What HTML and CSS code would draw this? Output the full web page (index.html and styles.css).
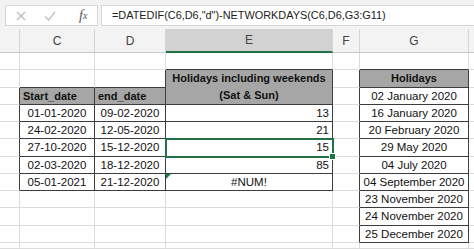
FILE: index.html
```html
<!DOCTYPE html>
<html lang="en">
<head>
  <meta charset="UTF-8" />
  <title>Holidays including weekends</title>
  <link rel="stylesheet" href="styles.css">
</head>
<body>
  <div class="formula-bar">
    <div class="fx-buttons">
      <svg class="btn-icon" width="12" height="12" viewBox="0 0 12 12"><path d="M2 2 L10 10 M10 2 L2 10" /></svg>
      <svg class="btn-icon check" width="12" height="12" viewBox="0 0 12 12"><path d="M1 6.5 L4.5 10 L11 2" /></svg>
      <span class="fx">f<sub>x</sub></span>
    </div>
    <div class="formula-input">=DATEDIF(C6,D6,"d")-NETWORKDAYS(C6,D6,G3:G11)</div>
  </div>

  <div class="sheet">
    <!-- column headers -->
    <div class="colhead"></div>
    <div class="colhead">C</div>
    <div class="colhead">D</div>
    <div class="colhead sel">E</div>
    <div class="colhead">F</div>
    <div class="colhead">G</div>
    <div class="colhead"></div>

    <!-- row 1 -->
    <div class="cell"></div>
    <div class="cell"></div>
    <div class="cell"></div>
    <div class="cell db"></div>
    <div class="cell"></div>
    <div class="cell db"></div>
    <div class="cell"></div>

    <!-- row 2 -->
    <div class="cell"></div>
    <div class="cell db"></div>
    <div class="cell dr db"></div>
    <div class="cell head-e fill bold dr db">
      <span>Holidays including weekends</span>
      <span>(Sat &amp; Sun)</span>
    </div>
    <div class="cell dr"></div>
    <div class="cell fill bold mid dr db">Holidays</div>
    <div class="cell"></div>

    <!-- row 3 -->
    <div class="cell dr"></div>
    <div class="cell fill bold dr db">Start_date</div>
    <div class="cell fill bold dr db">end_date</div>
    <div class="cell dr"></div>
    <div class="cell mid dr db">02 January 2020</div>
    <div class="cell"></div>

    <!-- row 4 -->
    <div class="cell dr"></div>
    <div class="cell mid dr db">01-01-2020</div>
    <div class="cell mid dr db">09-02-2020</div>
    <div class="cell end dr db">13</div>
    <div class="cell dr"></div>
    <div class="cell mid dr db">16 January 2020</div>
    <div class="cell"></div>

    <!-- row 5 -->
    <div class="cell dr"></div>
    <div class="cell mid dr db">24-02-2020</div>
    <div class="cell mid dr db">12-05-2020</div>
    <div class="cell end dr db">21</div>
    <div class="cell dr"></div>
    <div class="cell mid dr db">20 February 2020</div>
    <div class="cell"></div>

    <!-- row 6 -->
    <div class="cell dr"></div>
    <div class="cell mid dr db">27-10-2020</div>
    <div class="cell mid dr db">15-12-2020</div>
    <div class="cell end dr db active">15</div>
    <div class="cell dr"></div>
    <div class="cell mid dr db">29 May 2020</div>
    <div class="cell"></div>

    <!-- row 7 -->
    <div class="cell dr"></div>
    <div class="cell mid dr db">02-03-2020</div>
    <div class="cell mid dr db">18-12-2020</div>
    <div class="cell end dr db">85</div>
    <div class="cell dr"></div>
    <div class="cell mid dr db">04 July 2020</div>
    <div class="cell"></div>

    <!-- row 8 -->
    <div class="cell dr"></div>
    <div class="cell mid dr db">05-01-2021</div>
    <div class="cell mid dr db">21-12-2020</div>
    <div class="cell mid dr db error">#NUM!</div>
    <div class="cell dr"></div>
    <div class="cell mid dr db">04 September 2020</div>
    <div class="cell"></div>

    <!-- row 9 -->
    <div class="cell"></div>
    <div class="cell"></div>
    <div class="cell"></div>
    <div class="cell"></div>
    <div class="cell dr"></div>
    <div class="cell mid dr db">23 November 2020</div>
    <div class="cell"></div>

    <!-- row 10 -->
    <div class="cell"></div>
    <div class="cell"></div>
    <div class="cell"></div>
    <div class="cell"></div>
    <div class="cell dr"></div>
    <div class="cell mid dr db">24 November 2020</div>
    <div class="cell"></div>

    <!-- row 11 -->
    <div class="cell"></div>
    <div class="cell"></div>
    <div class="cell"></div>
    <div class="cell"></div>
    <div class="cell dr"></div>
    <div class="cell mid dr db">25 December 2020</div>
    <div class="cell"></div>

    <!-- row 12 (cut off) -->
    <div class="cell"></div>
    <div class="cell"></div>
    <div class="cell"></div>
    <div class="cell"></div>
    <div class="cell"></div>
    <div class="cell"></div>
    <div class="cell"></div>
  </div>
</body>
</html>
```

FILE: styles.css
```css
body {
  margin: 0;
  font-family: "Liberation Sans", Arial, sans-serif;
  background: #fff;
  color: #111;
  overflow: hidden;
}

/* formula bar */
.formula-bar {
  display: flex;
  gap: 3px;
  height: 29px;
  padding: 5px 0 3px 5px;
  box-sizing: border-box;
  background: #f3f3f3;
}

.fx-buttons {
  display: flex;
  align-items: center;
  width: 93px;
  box-sizing: border-box;
  padding-left: 9px;
  background: #fff;
  border: 1px solid #d6d6d6;
}

.btn-icon {
  fill: none;
  stroke: #bcbcbc;
  stroke-width: 1.2;
}

.btn-icon.check {
  margin-left: 17px;
}

.fx {
  margin-left: 23px;
  font-family: "Liberation Serif", serif;
  font-style: italic;
  font-size: 14px;
  color: #555;
}

.fx sub {
  font-size: 10px;
  vertical-align: 1px;
}

.formula-input {
  flex: 1;
  padding-left: 10px;
  background: #fff;
  border: 1px solid #d6d6d6;
  border-right: none;
  font-size: 10.9px;
  line-height: 19px;
  color: #222;
  white-space: nowrap;
}

/* sheet grid */
.sheet {
  display: grid;
  grid-template-columns: 20px 75px 71px 167px 27px 109px 1fr;
  grid-template-rows: 24px repeat(11, 17.25px) 1fr;
  height: 220px;
  font-size: 11.5px;
}

.colhead {
  display: flex;
  align-items: center;
  justify-content: center;
  background: #f3f3f3;
  border-right: 1px solid #d4d4d4;
  border-bottom: 1px solid #c8c8c8;
  font-size: 12px;
  color: #444;
}

.colhead.sel {
  background: #d2d2d2;
  border-bottom: 2px solid #217346;
}

.cell {
  position: relative;
  display: flex;
  align-items: center;
  padding: 0 3px;
  border-right: 1px solid #dcdcdc;
  border-bottom: 1px solid #dcdcdc;
  white-space: nowrap;
}

.dr { border-right-color: #3c3c3c; }
.db { border-bottom-color: #3c3c3c; }
.fill { background: #a6a6a6; }
.bold { font-weight: bold; font-size: 11px; }
.mid { justify-content: center; }
.end { justify-content: flex-end; }

.head-e {
  grid-row: span 2;
  flex-direction: column;
  justify-content: center;
  line-height: 17px;
}

.active {
  z-index: 1;
  outline: 2px solid #217346;
  outline-offset: -1px;
}

/* fill handle */
.active::after {
  content: "";
  position: absolute;
  right: -4px;
  bottom: -4px;
  width: 5px;
  height: 5px;
  background: #217346;
  border: 1px solid #fff;
}

/* error indicator */
.error::before {
  content: "";
  position: absolute;
  top: 0;
  left: 0;
  border-top: 5px solid #1e7a45;
  border-right: 5px solid transparent;
}
```
